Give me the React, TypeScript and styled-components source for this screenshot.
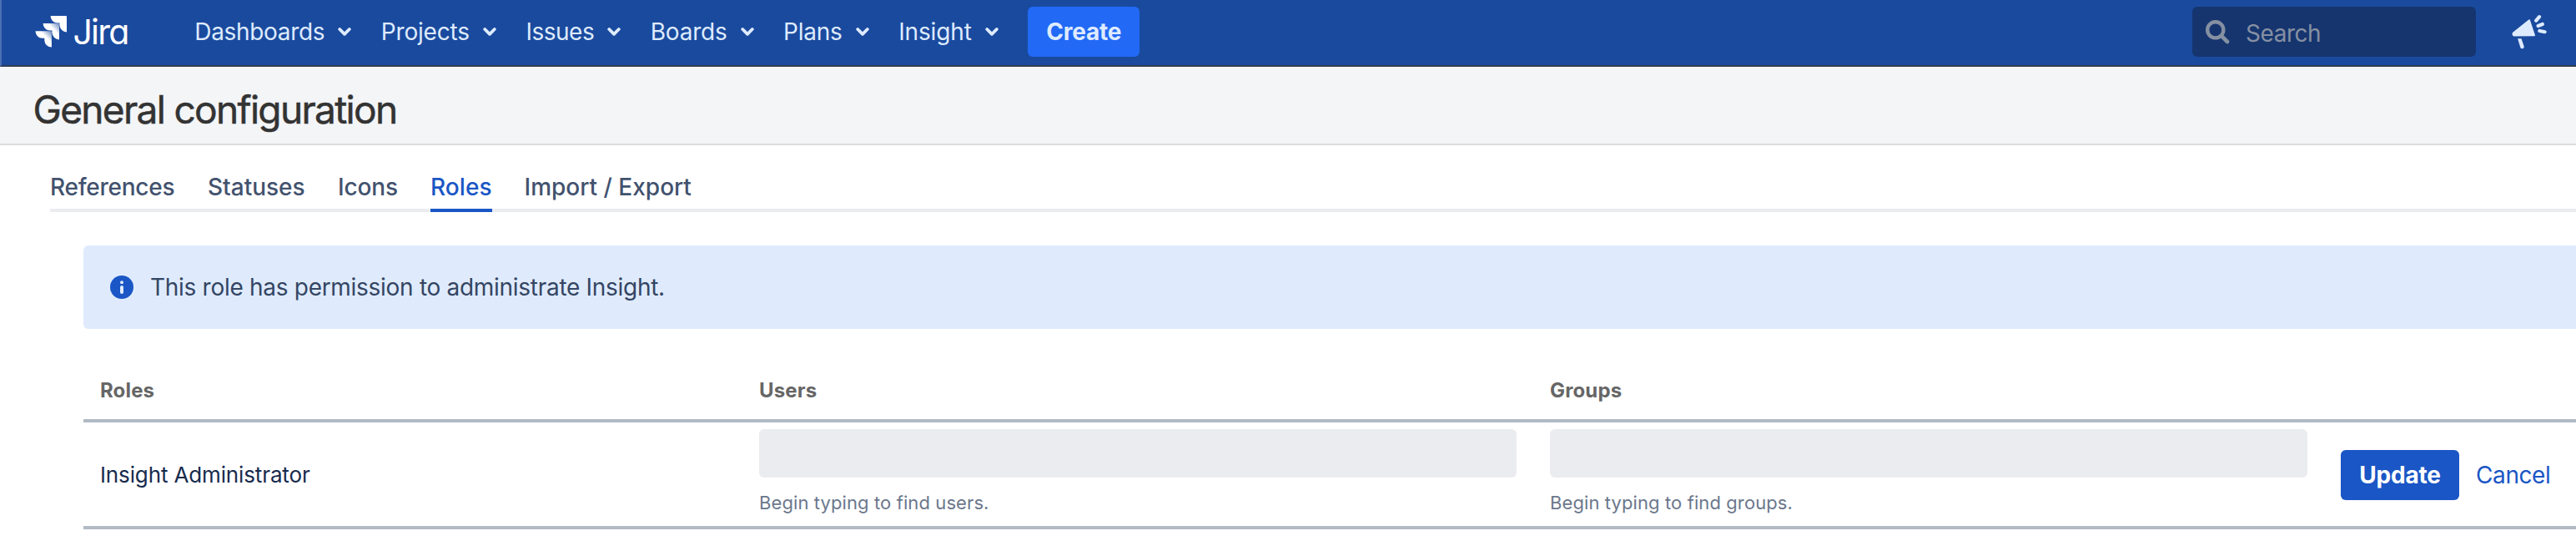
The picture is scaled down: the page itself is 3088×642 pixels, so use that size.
import React from 'react';
import styled, { createGlobalStyle } from 'styled-components';

const GlobalStyle = createGlobalStyle`
  * { box-sizing: border-box; }
  body {
    margin: 0;
    background: #fff;
    color: #172b4d;
    font-family: Inter, "Liberation Sans", sans-serif;
    font-size: 28px;
    overflow: hidden;
  }
`;

const Page = styled.div`
  height: 642px;
  overflow: hidden;
  display: flex;
  flex-direction: column;
`;

const Header = styled.header`
  height: 80px;
  flex: none;
  display: flex;
  align-items: center;
  padding: 0 34px 2px 39.5px;
  background: #1a4a9e;
  border-bottom: 2px solid #2e3d54;
  border-left: 2px solid #4a6fb3;
`;

const Logo = styled.a`
  display: flex;
  align-items: center;
  gap: 6px;
  width: 191.8px;
  color: #fff;
`;

const LogoText = styled.span`
  font-size: 41px;
  line-height: 60px;
  letter-spacing: -1.8px;
  font-feature-settings: "cv11" 1;
`;

const Nav = styled.nav`
  display: flex;
  align-items: center;
  color: #deebff;
`;

const NavItem = styled.a<{ $spacing: number }>`
  display: flex;
  align-items: center;
  line-height: 60px;
  letter-spacing: ${(p) => p.$spacing}px;
  margin-right: 35.5px;

  svg { margin-left: 16px; }
`;

const Button = styled.button<{ $tone: 'bright' | 'primary'; $width: number }>`
  width: ${(p) => p.$width}px;
  height: 60px;
  padding: 0;
  border: 0;
  border-radius: 6px;
  background: ${(p) => (p.$tone === 'bright' ? '#2269f5' : '#1a56c5')};
  color: ${(p) => (p.$tone === 'bright' ? '#deebff' : '#fff')};
  font: 700 28px/60px Inter, sans-serif;
  letter-spacing: -0.2px;
`;

const Search = styled.div`
  width: 340px;
  height: 60px;
  margin-left: auto;
  margin-right: 42px;
  padding-left: 16px;
  display: flex;
  align-items: center;
  gap: 19px;
  border-radius: 6px;
  background: #16356f;
  color: #8590a2;
  letter-spacing: -0.45px;

  span { padding-top: 4px; }
`;

const TitleBar = styled.div`
  height: 94px;
  flex: none;
  padding: 10px 0 0 39.5px;
  background: #f4f5f7;
  border-bottom: 2px solid #dcdcdd;
`;

const Title = styled.h1`
  margin: 0;
  font-size: 46px;
  line-height: 82px;
  font-weight: 400;
  letter-spacing: -1.67px;
  color: #333;
  -webkit-text-stroke: 0.5px #333;
`;

const Tabs = styled.div`
  height: 80px;
  flex: none;
  margin-left: 60px;
  padding-top: 20px;
  display: flex;
  gap: 40px;
  box-shadow: inset 0 -4px 0 #ebecf0;
`;

const Tab = styled.a<{ $active?: boolean; $width: number; $spacing: number }>`
  width: ${(p) => p.$width}px;
  height: 60px;
  line-height: 60px;
  white-space: nowrap;
  font-weight: 500;
  letter-spacing: ${(p) => p.$spacing}px;
  color: ${(p) => (p.$active ? '#1a56c5' : '#42526e')};
  box-shadow: ${(p) => (p.$active ? 'inset 0 -4px 0 #1a56c5' : 'none')};

  &:last-child { margin-left: -1.5px; }
`;

const Banner = styled.div`
  height: 100px;
  flex: none;
  margin: 40px 0 0 100px;
  padding-left: 32px;
  display: flex;
  align-items: center;
  gap: 20px;
  border-radius: 6px 0 0 6px;
  background: #dfebfd;
  color: #344563;
  letter-spacing: -0.29px;
`;

const Row = styled.div<{ $height: number }>`
  height: ${(p) => p.$height}px;
  flex: none;
  margin-left: 100px;
  display: grid;
  grid-template-columns: 790px 948px 948px 1fr;
  border-bottom: 4px solid #b2bac4;
`;

const HeadCell = styled.div`
  padding: 44.5px 20px 0;
  font-size: 24px;
  line-height: 58px;
  font-weight: 700;
  letter-spacing: 0.15px;
  color: #666;
`;

const NameCell = styled.div`
  padding-left: 20px;
  font-size: 26px;
  line-height: 125px;
  letter-spacing: -0.13px;
`;

const FieldCell = styled.div`
  padding: 8px 20px 0;
`;

const Field = styled.div`
  height: 58px;
  border-radius: 6px;
  background: #ebecf0;
`;

const Hint = styled.div`
  font-size: 22px;
  line-height: 60px;
  letter-spacing: 0.1px;
  color: #6b778c;
`;

const Actions = styled.div`
  display: flex;
  align-items: center;
  gap: 20px;
  padding-left: 20px;
`;

const Cancel = styled.a`
  color: #1a56c5;
  letter-spacing: -0.4px;
`;

const Chevron = () => (
  <svg width="16" height="12" viewBox="0 0 16 12">
    <path d="M2.2 3 L8 8.8 L13.8 3" fill="none" stroke="#deebff" strokeWidth="3.8" strokeLinecap="round" strokeLinejoin="round" />
  </svg>
);

const ARROW = 'M0 0H18.4A1 1 0 0 1 19.4 1V19.4A8.6 8.6 0 0 1 10.8 11.2V8.6H8.2A8.4 8.4 0 0 1 0 0Z';

const JiraMark = () => (
  <svg width="40" height="40" viewBox="0 0 40 40">
    <defs>
      <linearGradient id="fade" x1="1" y1="0" x2="0.64" y2="0.36">
        <stop offset="0.1" stopColor="#fff" stopOpacity="0.4" />
        <stop offset="1" stopColor="#fff" />
      </linearGradient>
    </defs>
    <path d={ARROW} transform="translate(18.6 1)" fill="#fff" />
    <path d={ARROW} transform="translate(9.6 10)" fill="url(#fade)" />
    <path d={ARROW} transform="translate(0.5 19.2)" fill="url(#fade)" />
  </svg>
);

const SearchIcon = () => (
  <svg width="29" height="29" viewBox="0 0 29 29">
    <circle cx="11.8" cy="11.8" r="9.6" fill="none" stroke="#8590a2" strokeWidth="4.4" />
    <path d="M19 19L26 26" stroke="#8590a2" strokeWidth="4.6" strokeLinecap="round" />
  </svg>
);

const Megaphone = () => (
  <svg width="44" height="42" viewBox="20 17 44 42">
    <path d="M42 24.3L48 42.2L23.8 42.6A1.9 1.9 0 0 1 22.9 39.6Z" fill="#deebff" stroke="#deebff" strokeWidth="2" strokeLinejoin="round" />
    <path d="M50.2 24.6L54 20.2M52.6 31L57.8 29M54.4 37L60.6 38.2" stroke="#deebff" strokeWidth="4.2" strokeLinecap="round" />
    <path d="M28.1 46.2H32.5L35.6 55.2A2.2 2.2 0 0 1 31.3 56.8Z" fill="#deebff" />
  </svg>
);

const InfoIcon = () => (
  <svg width="28" height="28" viewBox="0 0 28 28">
    <circle cx="14" cy="14" r="14" fill="#1a56c5" />
    <circle cx="14" cy="8.2" r="2" fill="#deebff" />
    <path d="M14 14V20" stroke="#deebff" strokeWidth="4" strokeLinecap="round" />
  </svg>
);

const NAV: [string, number][] = [
  ['Dashboards', -0.32],
  ['Projects', -0.18],
  ['Issues', -0.49],
  ['Boards', -0.2],
  ['Plans', -0.23],
  ['Insight', -0.14],
];

const TABS: [string, number, number][] = [
  ['References', 149, -0.25],
  ['Statuses', 116, 0],
  ['Icons', 71, -0.14],
  ['Roles', 74, 0.08],
  ['Import / Export', 200, 0],
];

export default function App() {
  return (
    <Page>
      <GlobalStyle />
      <Header>
        <Logo>
          <JiraMark />
          <LogoText>Jira</LogoText>
        </Logo>
        <Nav>
          {NAV.map(([label, spacing]) => (
            <NavItem key={label} $spacing={spacing}>
              {label}
              <Chevron />
            </NavItem>
          ))}
        </Nav>
        <Button $tone="bright" $width={134}>Create</Button>
        <Search>
          <SearchIcon />
          <span>Search</span>
        </Search>
        <Megaphone />
      </Header>
      <TitleBar>
        <Title>General configuration</Title>
      </TitleBar>
      <Tabs>
        {TABS.map(([label, width, spacing]) => (
          <Tab key={label} $active={label === 'Roles'} $width={width} $spacing={spacing}>
            {label}
          </Tab>
        ))}
      </Tabs>
      <Banner>
        <InfoIcon />
        This role has permission to administrate Insight.
      </Banner>
      <Row $height={112}>
        <HeadCell>Roles</HeadCell>
        <HeadCell>Users</HeadCell>
        <HeadCell>Groups</HeadCell>
      </Row>
      <Row $height={128}>
        <NameCell>Insight Administrator</NameCell>
        <FieldCell>
          <Field />
          <Hint>Begin typing to find users.</Hint>
        </FieldCell>
        <FieldCell>
          <Field />
          <Hint>Begin typing to find groups.</Hint>
        </FieldCell>
        <Actions>
          <Button $tone="primary" $width={142}>Update</Button>
          <Cancel>Cancel</Cancel>
        </Actions>
      </Row>
    </Page>
  );
}
